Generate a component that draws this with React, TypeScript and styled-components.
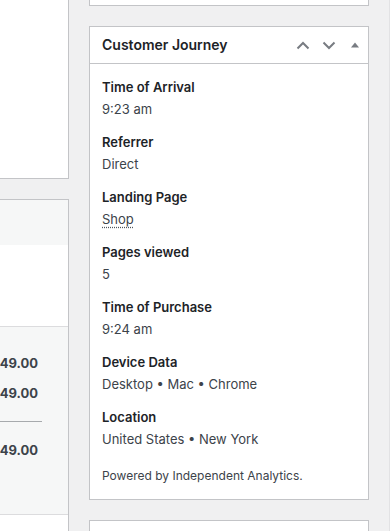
import styled, { createGlobalStyle } from "styled-components";

const GlobalStyle = createGlobalStyle`
  html, body {
    margin: 0;
    padding: 0;
    background: #f0f0f1;
    font-family: Inter, "Noto Sans", "Liberation Sans", sans-serif;
    color: #3c434a;
    overflow: hidden;
  }
`;

const Page = styled.div`
  display: flex;
  gap: 20px;
  width: 390px;
  height: 531px;
  overflow: hidden;
  position: relative;
`;

const LeftColumn = styled.div`
  width: 69px;
  flex: none;
  display: flex;
  flex-direction: column;
  gap: 20px;
`;

const RightColumn = styled.div`
  width: 280px;
  flex: none;
  display: flex;
  flex-direction: column;
  gap: 20px;
`;

const EdgeLine = styled.div`
  position: absolute;
  top: 0;
  bottom: 0;
  left: 389px;
  width: 1px;
  background: #e2e2e4;
`;

const Panel = styled.div<{ $height?: number; $open?: "top" | "bottom" }>`
  box-sizing: border-box;
  background: #fff;
  border: 1px solid #c3c4c7;
  ${(p) => (p.$open === "top" ? "border-top: none;" : "")}
  ${(p) => (p.$open === "bottom" ? "border-bottom: none; flex: 1;" : "")}
  ${(p) => (p.$height ? `height: ${p.$height}px; flex: none;` : "")}
  overflow: hidden;
`;

const LeftPanel = styled(Panel)`
  border-left: none;
`;

const OrderHead = styled.div`
  height: 45px;
  background: #f6f7f7;
`;

const OrderBody = styled.div`
  height: 81px;
  background: #fff;
  border-bottom: 1px solid #dcdcde;
`;

const Totals = styled.div`
  background: #f6f7f7;
  padding-top: 26px;
  height: 188px;
  box-sizing: border-box;
  border-bottom: 1px solid #dcdcde;
`;

const TotalRow = styled.div<{ $rule?: boolean }>`
  display: flex;
  justify-content: flex-end;
  padding-right: 30px;
  font-size: 13px;
  font-weight: 700;
  line-height: 20px;
  color: #3c434a;
  white-space: nowrap;
  margin-bottom: 10px;
  ${(p) =>
    p.$rule
      ? `margin-top: 18px; padding-top: 18px; border-top: 1px solid #a7aaad; margin-right: 26px; padding-right: 4px;`
      : ""}
`;

const BoxHeader = styled.div`
  display: flex;
  align-items: center;
  height: 36px;
  padding: 0 12px;
  border-bottom: 1px solid #c3c4c7;
`;

const BoxTitle = styled.h2`
  flex: 1;
  margin: 0;
  font-size: 14px;
  font-weight: 600;
  color: #1d2327;
  line-height: 1.4;
`;

const HeaderButtons = styled.div`
  display: flex;
  align-items: center;
  gap: 12px;
  margin-right: -6px;
`;

const IconButton = styled.span`
  width: 14px;
  height: 14px;
  display: flex;
  align-items: center;
  justify-content: center;
  color: #787c82;
`;

const BoxBody = styled.div`
  padding: 14px 12px 14px;
`;

const Item = styled.div`
  margin-bottom: 15px;
`;

const Label = styled.div`
  font-size: 13px;
  font-weight: 600;
  line-height: 18px;
  color: #1d2327;
  margin-bottom: 4px;
`;

const Value = styled.div`
  font-size: 13px;
  line-height: 18px;
  color: #3c434a;
`;

const PageLink = styled.span`
  text-decoration: underline dotted;
  text-underline-offset: 3px;
  text-decoration-color: #50575e;
`;

const Footer = styled.div`
  padding-top: 4px;
  font-size: 12px;
  line-height: 18px;
  color: #3c434a;
`;

const ChevronUp = () => (
  <svg width="14" height="9" viewBox="0 0 14 9" fill="none">
    <path d="M1.5 7.5 7 2l5.5 5.5" stroke="currentColor" strokeWidth="2" />
  </svg>
);

const ChevronDown = () => (
  <svg width="14" height="9" viewBox="0 0 14 9" fill="none">
    <path d="M1.5 1.5 7 7l5.5-5.5" stroke="currentColor" strokeWidth="2" />
  </svg>
);

const Triangle = () => (
  <svg width="8" height="6" viewBox="0 0 8 6">
    <path d="M4 0.5 8 5.5H0z" fill="currentColor" />
  </svg>
);

const journey = [
  { label: "Time of Arrival", value: "9:23 am" },
  { label: "Referrer", value: "Direct" },
  { label: "Landing Page", value: "Shop", link: true },
  { label: "Pages viewed", value: "5" },
  { label: "Time of Purchase", value: "9:24 am" },
  { label: "Device Data", value: "Desktop • Mac • Chrome" },
  { label: "Location", value: "United States • New York" },
];

export default function App() {
  return (
    <>
      <GlobalStyle />
      <Page>
        <LeftColumn>
          <LeftPanel $height={179} $open="top" />
          <LeftPanel $open="bottom">
            <OrderHead />
            <OrderBody />
            <Totals>
              <TotalRow>49.00</TotalRow>
              <TotalRow>49.00</TotalRow>
              <TotalRow $rule>49.00</TotalRow>
            </Totals>
          </LeftPanel>
        </LeftColumn>
        <RightColumn>
          <Panel $height={6} $open="top" />
          <Panel>
            <BoxHeader>
              <BoxTitle>Customer Journey</BoxTitle>
              <HeaderButtons>
                <IconButton>
                  <ChevronUp />
                </IconButton>
                <IconButton>
                  <ChevronDown />
                </IconButton>
                <IconButton>
                  <Triangle />
                </IconButton>
              </HeaderButtons>
            </BoxHeader>
            <BoxBody>
              {journey.map((item) => (
                <Item key={item.label}>
                  <Label>{item.label}</Label>
                  <Value>
                    {item.link ? <PageLink>{item.value}</PageLink> : item.value}
                  </Value>
                </Item>
              ))}
              <Footer>Powered by Independent Analytics.</Footer>
            </BoxBody>
          </Panel>
          <Panel $open="bottom" />
        </RightColumn>
        <EdgeLine />
      </Page>
    </>
  );
}
